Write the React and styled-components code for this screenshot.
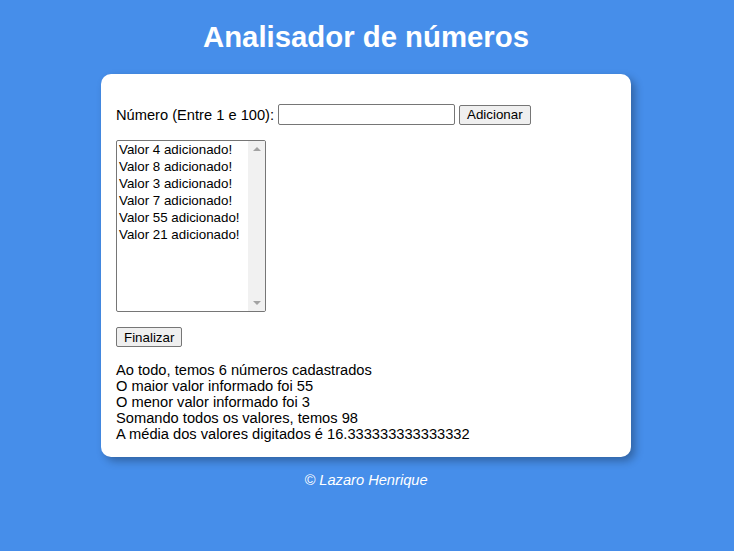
import React from "react"
import styled, { createGlobalStyle } from "styled-components"

const GlobalStyle = createGlobalStyle`
  html, body {
    margin: 0;
    padding: 0;
    background: #468eea;
  }
  body {
    font: normal 11pt "Liberation Sans", Arial, sans-serif;
    min-height: 551px;
  }
`

const Page = styled.div`
  display: flex;
  flex-direction: column;
  align-items: center;
  padding: 20px 2px 0 0;
`

const Titulo = styled.h1`
  margin: 0 0 20px;
  color: white;
  font-size: 2em;
  font-weight: bold;
  text-align: center;
`

const Card = styled.section`
  box-sizing: border-box;
  width: 530px;
  padding: 15px;
  background: white;
  border-radius: 10px;
  box-shadow: 4px 4px 8px rgba(0, 0, 0, 0.3);
  color: black;
`

const Linha = styled.div`
  display: flex;
  align-items: center;
  gap: 4px;
  margin: 15px 0;
`

const Campo = styled.input`
  box-sizing: border-box;
  width: 177px;
  height: 21px;
  margin: 0;
  padding: 1px 2px;
  border: 1px solid #767676;
  border-radius: 2px;
  font: 13.33px "Liberation Sans", Arial, sans-serif;
`

const Botao = styled.button`
  box-sizing: border-box;
  height: 20px;
  padding: 0 7px;
  background: #efefef;
  border: 1px solid #767676;
  border-radius: 2px;
  color: black;
  font: 13.33px "Liberation Sans", Arial, sans-serif;
  cursor: pointer;
`

const Lista = styled.div`
  box-sizing: border-box;
  display: flex;
  width: 150px;
  height: 172px;
  margin: 15px 0;
  border: 1px solid #767676;
  border-radius: 2px;
  overflow: hidden;
`

const Opcoes = styled.div`
  flex: 1;
  display: flex;
  flex-direction: column;
`

const Opcao = styled.div`
  height: 17px;
  padding: 0 2px;
  font: 13.33px/17px "Liberation Sans", Arial, sans-serif;
  white-space: nowrap;
`

const Trilho = styled.div`
  width: 17px;
  background: #f1f1f1;
  display: flex;
  flex-direction: column;
  justify-content: space-between;
  align-items: center;
  padding: 6px 0;
`

const Seta = styled.span`
  width: 0;
  height: 0;
  border-left: 4px solid transparent;
  border-right: 4px solid transparent;
  ${({ $baixo }) =>
    $baixo
      ? "border-top: 4px solid #a3a3a3;"
      : "border-bottom: 4px solid #a3a3a3;"}
`

const Resultado = styled.div`
  margin-top: 15px;
`

const Rodape = styled.footer`
  margin-top: 15px;
  color: white;
  font-style: italic;
  text-align: center;
`

const valores = [4, 8, 3, 7, 55, 21]

export default function App() {
  const soma = valores.reduce((a, b) => a + b, 0)
  const media = soma / valores.length

  return (
    <Page>
      <GlobalStyle />
      <Titulo>Analisador de números</Titulo>
      <Card>
        <Linha>
          <span>Número (Entre 1 e 100):</span>
          <Campo type="text" />
          <Botao>Adicionar</Botao>
        </Linha>
        <Lista>
          <Opcoes>
            {valores.map((v, i) => (
              <Opcao key={i}>Valor {v} adicionado!</Opcao>
            ))}
          </Opcoes>
          <Trilho>
            <Seta />
            <Seta $baixo />
          </Trilho>
        </Lista>
        <Botao>Finalizar</Botao>
        <Resultado>
          <div>Ao todo, temos {valores.length} números cadastrados</div>
          <div>O maior valor informado foi {Math.max(...valores)}</div>
          <div>O menor valor informado foi {Math.min(...valores)}</div>
          <div>Somando todos os valores, temos {soma}</div>
          <div>A média dos valores digitados é {media}</div>
        </Resultado>
      </Card>
      <Rodape>© Lazaro Henrique</Rodape>
    </Page>
  )
}
